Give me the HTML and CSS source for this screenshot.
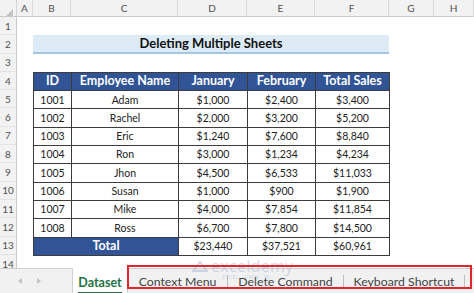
FILE: index.html
```html
<!DOCTYPE html>
<html>
<head>
<meta charset="utf-8">
<link rel="stylesheet" href="styles.css">
</head>
<body>
<div class="app">
  <div class="sheet">
    <div class="corner"><span class="tri"></span></div>
    <div class="ch">A</div>
    <div class="ch">B</div>
    <div class="ch">C</div>
    <div class="ch">D</div>
    <div class="ch">E</div>
    <div class="ch">F</div>
    <div class="ch">G</div>
    <div class="ch">H</div>
    <div class="rownums">
      <div>1</div><div>2</div><div>3</div><div>4</div><div>5</div><div>6</div><div>7</div>
      <div>8</div><div>9</div><div>10</div><div>11</div><div>12</div><div>13</div><div>14</div>
    </div>
    <div class="title">Deleting Multiple Sheets</div>
    <table class="data">
      <colgroup>
        <col class="c-id"><col class="c-name"><col class="c-jan"><col class="c-feb"><col class="c-tot">
      </colgroup>
      <thead>
        <tr><th>ID</th><th>Employee Name</th><th>January</th><th>February</th><th>Total Sales</th></tr>
      </thead>
      <tbody>
        <tr><td>1001</td><td>Adam</td><td>$1,000</td><td>$2,400</td><td>$3,400</td></tr>
        <tr><td>1002</td><td>Rachel</td><td>$2,000</td><td>$3,200</td><td>$5,200</td></tr>
        <tr><td>1003</td><td>Eric</td><td>$1,240</td><td>$7,600</td><td>$8,840</td></tr>
        <tr><td>1004</td><td>Ron</td><td>$3,000</td><td>$1,234</td><td>$4,234</td></tr>
        <tr><td>1005</td><td>Jhon</td><td>$4,500</td><td>$6,533</td><td>$11,033</td></tr>
        <tr><td>1006</td><td>Susan</td><td>$1,000</td><td>$900</td><td>$1,900</td></tr>
        <tr><td>1007</td><td>Mike</td><td>$4,000</td><td>$7,854</td><td>$11,854</td></tr>
        <tr><td>1008</td><td>Ross</td><td>$6,700</td><td>$7,800</td><td>$14,500</td></tr>
        <tr class="total"><th colspan="2">Total</th><td>$23,440</td><td>$37,521</td><td>$60,961</td></tr>
      </tbody>
    </table>
  </div>
  <div class="tabbar">
    <div class="nav">
      <span class="arrow left"></span>
      <span class="arrow right"></span>
    </div>
    <div class="tab active"><span>Dataset</span></div>
    <div class="tab t-context">Context Menu</div>
    <div class="sep"></div>
    <div class="tab t-delete">Delete Command</div>
    <div class="sep"></div>
    <div class="tab t-keys">Keyboard Shortcut</div>
    <div class="sep"></div>
  </div>
  <div class="watermark">
    <svg class="wm-logo" width="16" height="12" viewBox="0 0 16 12"><path d="M1 11 L8 2 L15 11 Z" fill="none" stroke="#a9bcd8" stroke-width="2"/></svg>
    <span class="wm-text">exceldemy</span>
    <span class="wm-sub">EXCEL · DATA · BI</span>
  </div>
  <div class="highlight"></div>
</div>
</body>
</html>
```
FILE: styles.css
```css
* { box-sizing: border-box; }
html, body { margin: 0; padding: 0; }
body {
  width: 474px;
  height: 293px;
  overflow: hidden;
  background: #ffffff;
  font-family: Lato, "Liberation Sans", sans-serif;
}
.app {
  position: relative;
  width: 474px;
  height: 293px;
  display: flex;
  flex-direction: column;
}
.sheet {
  height: 268px;
  overflow: hidden;
  display: grid;
  grid-template-columns: 17px 16px 38px 107px 69px 68px 74px 45px 40px;
  grid-template-rows: 17px repeat(14, 18.3px);
  background: #ffffff;
}
.corner {
  grid-area: 1 / 1 / 2 / 2;
  background: #f2f2f2;
  border-right: 1px solid #d4d4d4;
  border-bottom: 1px solid #c9c9c9;
  position: relative;
}
.tri {
  position: absolute;
  left: 6px;
  top: 9px;
  width: 0;
  height: 0;
  border-left: 7px solid transparent;
  border-bottom: 7px solid #c4c4c4;
}
.ch {
  grid-row: 1;
  background: #f2f2f2;
  border-right: 1px solid #d9d9d9;
  border-bottom: 1px solid #c9c9c9;
  color: #505050;
  font-size: 10px;
  display: flex;
  align-items: center;
  justify-content: center;
}
.rownums {
  grid-area: 2 / 1 / 16 / 2;
  display: flex;
  flex-direction: column;
  background: #f2f2f2;
  border-right: 1px solid #c9c9c9;
}
.rownums div {
  height: 18.3px;
  flex: none;
  display: flex;
  align-items: center;
  justify-content: center;
  font-size: 10px;
  color: #505050;
  border-bottom: 1px solid #e2e2e2;
}
.title {
  grid-area: 3 / 3 / 4 / 8;
  background: #ddebf7;
  border-bottom: 2px solid #a7c4e2;
  display: flex;
  align-items: center;
  justify-content: center;
  font-weight: 700;
  font-size: 13px;
  color: #111;
}
.data {
  grid-area: 5 / 3 / 15 / 8;
  width: 356px;
  height: 183px;
  border-collapse: collapse;
  table-layout: fixed;
  font-size: 10.5px;
  color: #222;
}
.c-id { width: 38px; }
.c-name { width: 107px; }
.c-jan { width: 69px; }
.c-feb { width: 68px; }
.c-tot { width: 74px; }
.data th, .data td {
  border: 1px solid #3c3c3c;
  padding: 0;
  text-align: center;
  height: 18.3px;
  line-height: 1;
}
.data th {
  background: #305496;
  color: #ffffff;
  font-weight: 700;
  font-size: 12.5px;
}
.tabbar {
  height: 25px;
  flex: none;
  display: flex;
  align-items: stretch;
  background: #f1f1f1;
  border-top: 1px solid #cfcfcf;
  font-size: 12.3px;
  color: #444;
}
.nav {
  width: 72px;
  display: flex;
  align-items: center;
  padding-left: 18px;
  gap: 15px;
}
.arrow {
  width: 0;
  height: 0;
  border-top: 3.5px solid transparent;
  border-bottom: 3.5px solid transparent;
}
.arrow.left { border-right: 4px solid #c3c3c3; }
.arrow.right { border-left: 4px solid #c3c3c3; }
.tab {
  display: flex;
  align-items: center;
  justify-content: center;
  white-space: nowrap;
}
.tab.active {
  width: 56px;
  background: #ffffff;
  border-left: 1px solid #d0d0d0;
  border-right: 1px solid #d0d0d0;
  margin-top: -1px;
  color: #217346;
  font-weight: 700;
  font-size: 12.5px;
}
.tab.active span {
  border-bottom: 2px solid #217346;
  padding: 3px 0 2px;
  margin-top: 4px;
}
.t-context { width: 99px; }
.t-delete { width: 115px; }
.t-keys { width: 120px; }
.sep {
  width: 1px;
  background: #bdbdbd;
  margin: 6px 0;
}
.highlight {
  position: absolute;
  left: 127px;
  top: 265px;
  width: 345px;
  height: 24px;
  border: 2px solid #e3242b;
  pointer-events: none;
}
.watermark {
  position: absolute;
  left: 192px;
  top: 255px;
  display: flex;
  align-items: center;
  gap: 3px;
  opacity: 0.55;
  pointer-events: none;
}
.wm-text {
  font-size: 16px;
  color: #a9bcd8;
  font-family: "Open Sans", sans-serif;
  letter-spacing: 0.3px;
}
.wm-sub {
  position: absolute;
  left: 30px;
  top: 19px;
  font-size: 5px;
  color: #a9bcd8;
  letter-spacing: 0.5px;
}
```
